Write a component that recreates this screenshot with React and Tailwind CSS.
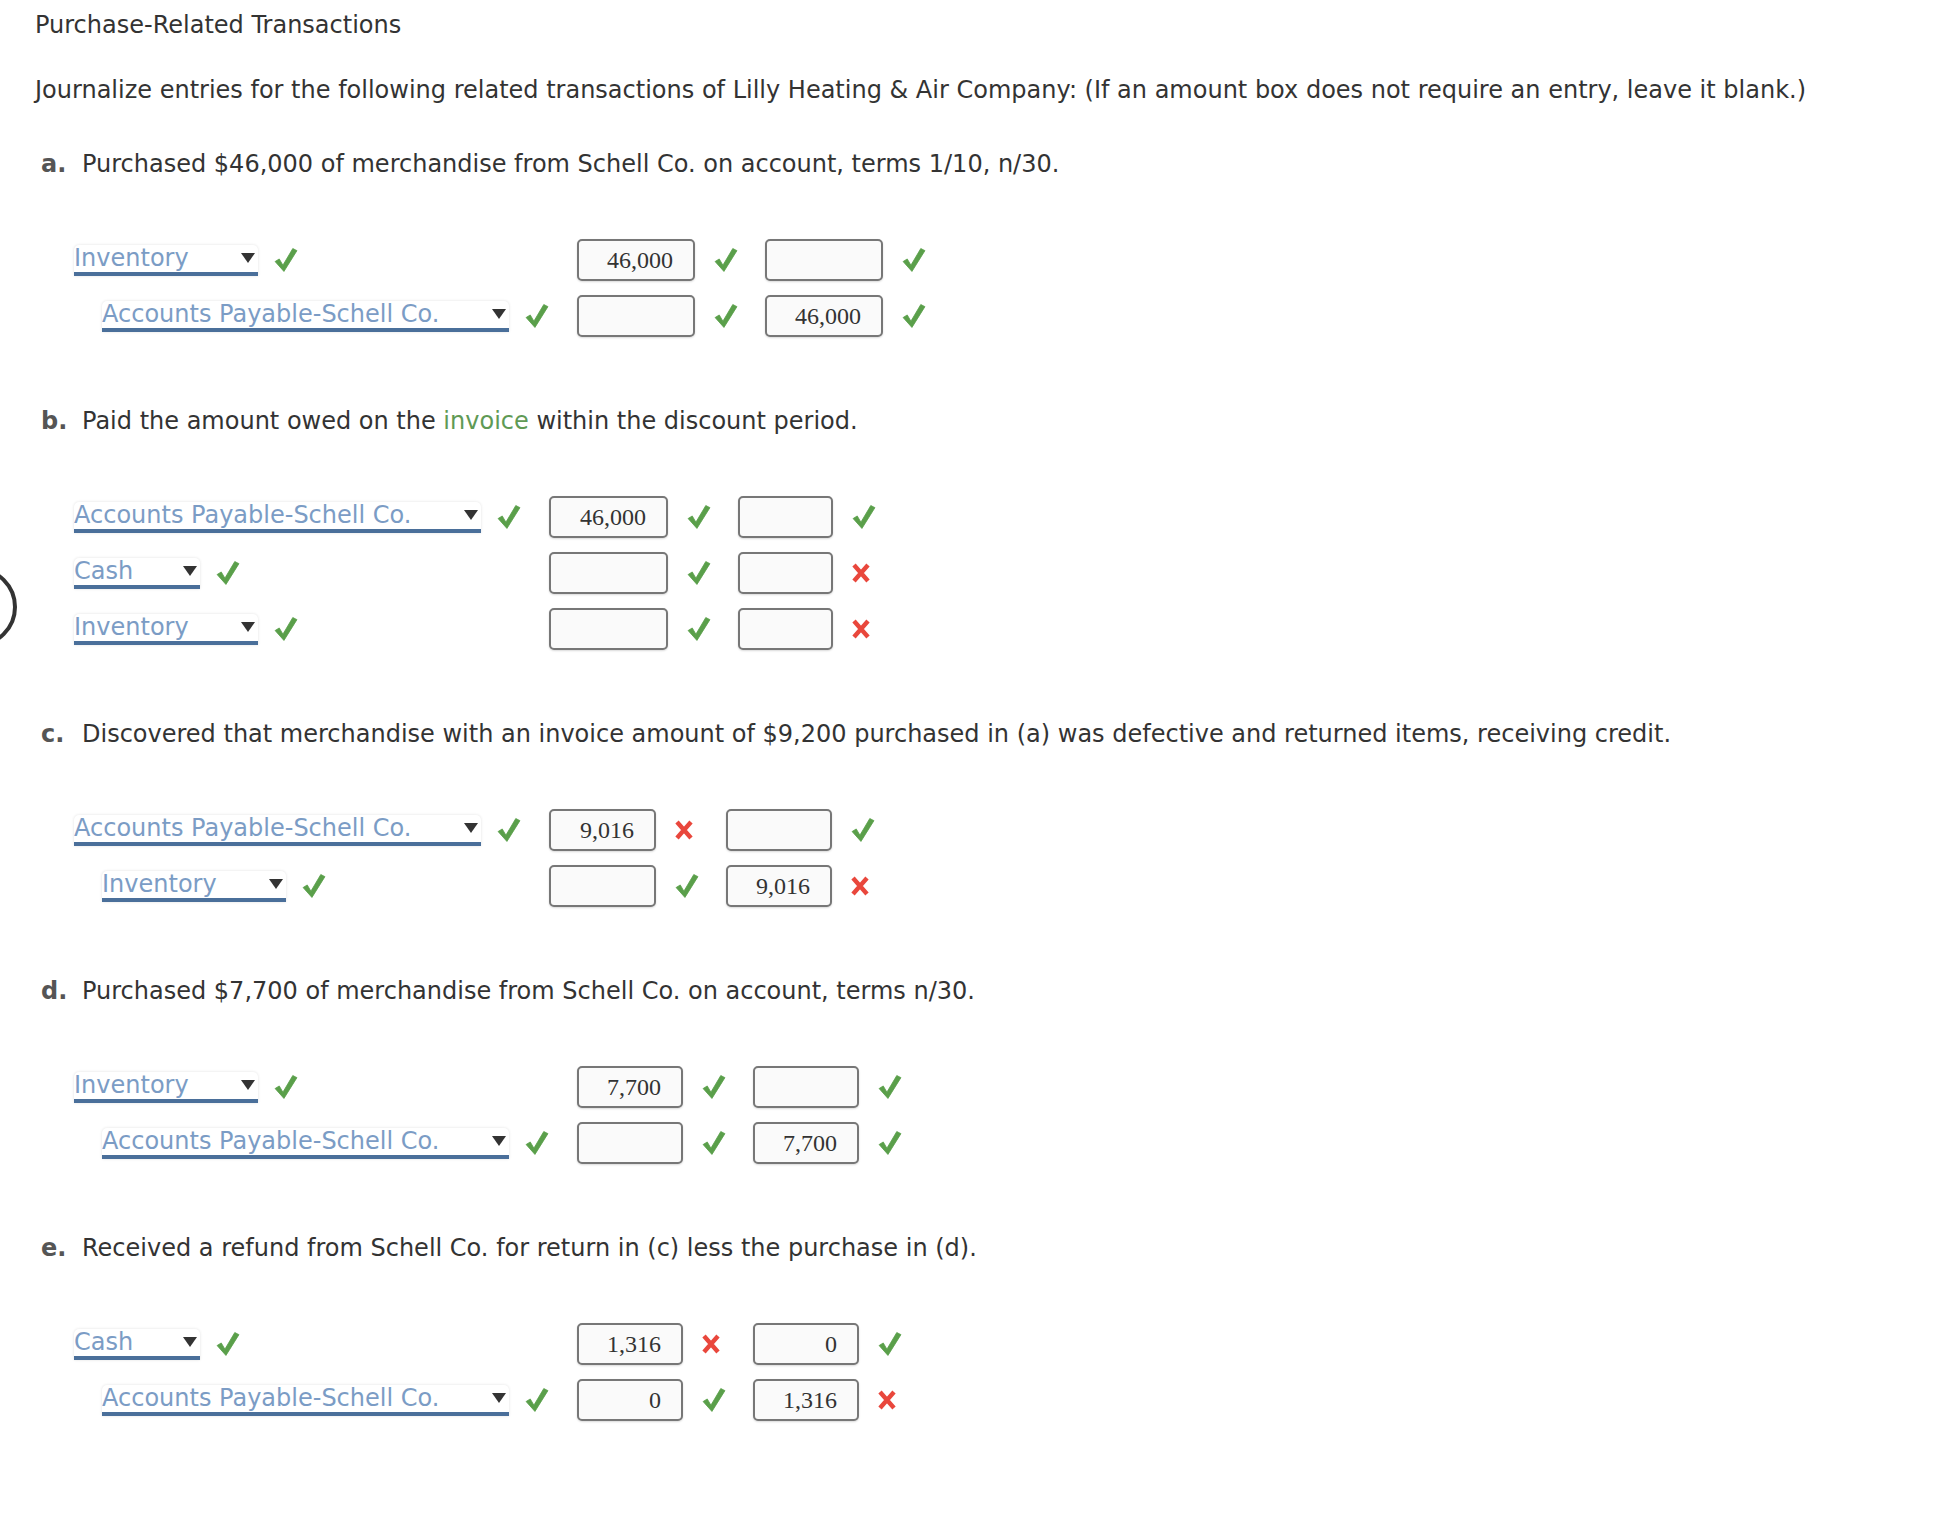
import React from "react";

const sections = [
  {
    key: "a",
    text: <>Purchased $46,000 of merchandise from Schell Co. on account, terms 1/10, n/30.</>,
    left: 503,
    w1: 118,
    w2: 118,
    rows: [
      { indent: false, acct: "Inventory", dd: 184, v1: "46,000", m1: "ok", v2: "", m2: "ok" },
      { indent: true, acct: "Accounts Payable-Schell Co.", dd: 407, v1: "", m1: "ok", v2: "46,000", m2: "ok" },
    ],
  },
  {
    key: "b",
    text: (
      <>
        Paid the amount owed on the <span className="text-[#5f9a55]">invoice</span> within the discount period.
      </>
    ),
    left: 475,
    w1: 119,
    w2: 95,
    rows: [
      { indent: false, acct: "Accounts Payable-Schell Co.", dd: 407, v1: "46,000", m1: "ok", v2: "", m2: "ok" },
      { indent: false, acct: "Cash", dd: 126, v1: "", m1: "ok", v2: "", m2: "x" },
      { indent: false, acct: "Inventory", dd: 184, v1: "", m1: "ok", v2: "", m2: "x" },
    ],
  },
  {
    key: "c",
    text: (
      <>
        Discovered that merchandise with an invoice amount of $9,200 purchased in (a) was defective and returned items,
        receiving credit.
      </>
    ),
    left: 475,
    w1: 107,
    w2: 106,
    rows: [
      { indent: false, acct: "Accounts Payable-Schell Co.", dd: 407, v1: "9,016", m1: "x", v2: "", m2: "ok" },
      { indent: true, acct: "Inventory", dd: 184, v1: "", m1: "ok", v2: "9,016", m2: "x" },
    ],
  },
  {
    key: "d",
    text: <>Purchased $7,700 of merchandise from Schell Co. on account, terms n/30.</>,
    left: 503,
    w1: 106,
    w2: 106,
    rows: [
      { indent: false, acct: "Inventory", dd: 184, v1: "7,700", m1: "ok", v2: "", m2: "ok" },
      { indent: true, acct: "Accounts Payable-Schell Co.", dd: 407, v1: "", m1: "ok", v2: "7,700", m2: "ok" },
    ],
  },
  {
    key: "e",
    text: <>Received a refund from Schell Co. for return in (c) less the purchase in (d).</>,
    left: 503,
    w1: 106,
    w2: 106,
    rows: [
      { indent: false, acct: "Cash", dd: 126, v1: "1,316", m1: "x", v2: "0", m2: "ok" },
      { indent: true, acct: "Accounts Payable-Schell Co.", dd: 407, v1: "0", m1: "ok", v2: "1,316", m2: "x" },
    ],
  },
];

function Check() {
  return (
    <svg width="25" height="26" viewBox="0 0 24 25" className="shrink-0">
      <path
        d="M2 14 L6 11.5 L9.5 17.5 L19 1.5 L23 3.5 L10.5 23.5 Z"
        fill="#5a9f4a"
        stroke="#5a9f4a"
        strokeWidth="0.8"
        strokeLinejoin="round"
      />
    </svg>
  );
}

function Cross() {
  return (
    <svg width="20" height="22" viewBox="0 0 20 22" className="shrink-0">
      <path d="M3 3 L17 19 M17 3 L3 19" stroke="#e9473c" strokeWidth="4.4" strokeLinecap="butt" />
    </svg>
  );
}

function Mark({ type }) {
  return type === "x" ? <Cross /> : <Check />;
}

function Dropdown({ label, width }) {
  return (
    <div
      className="flex h-[31px] items-center justify-between overflow-hidden rounded-t-[5px] border-b-[4px] border-[#4a6f9a] bg-white shadow-[0_0_3px_rgba(0,0,0,0.12)]"
      style={{ width }}
    >
      <span className="whitespace-nowrap text-[24px] leading-none text-[#7b9cc5]">{label}</span>
      <svg width="14" height="10" viewBox="0 0 14 10" className="mr-[3px] shrink-0">
        <path d="M0 0 H14 L7 10 Z" fill="#333" />
      </svg>
    </div>
  );
}

function Amount({ value, width }) {
  return (
    <div
      className="flex h-[42px] shrink-0 items-center justify-end rounded-[5px] border-2 border-[#777] bg-[#fafafa] pr-[20px] text-[24px] text-[#333] shadow-[0_1px_2px_rgba(0,0,0,0.15)]"
      style={{ width, fontFamily: '"Liberation Serif", "Times New Roman", serif' }}
    >
      {value}
    </div>
  );
}

function Row({ row, left, w1, w2 }) {
  return (
    <div className="flex h-[42px] items-center">
      <div className="flex items-center gap-[15px]" style={{ width: left, paddingLeft: row.indent ? 28 : 0 }}>
        <Dropdown label={row.acct} width={row.dd} />
        <Check />
      </div>
      <Amount value={row.v1} width={w1} />
      <div className="flex w-[70px] pl-[18px]">
        <Mark type={row.m1} />
      </div>
      <Amount value={row.v2} width={w2} />
      <div className="flex w-[70px] pl-[18px]">
        <Mark type={row.m2} />
      </div>
    </div>
  );
}

export default function App() {
  return (
    <div
      className="relative min-h-[1518px] w-[1948px] overflow-hidden bg-white pl-[35px] pt-[11px] text-[24px] leading-[28px] text-[#333]"
      style={{ fontFamily: '"DejaVu Sans", Verdana, sans-serif' }}
    >
      <div className="absolute left-[-63px] top-[567px] h-[80px] w-[80px] rounded-full border-[4px] border-[#333]" />

      <h1 className="text-[24px] font-normal">Purchase-Related Transactions</h1>
      <p className="mt-[37px] whitespace-nowrap">
        Journalize entries for the following related transactions of Lilly Heating &amp; Air Company: (If an amount box
        does not require an entry, leave it blank.)
      </p>

      <div className="mt-[46px] flex flex-col gap-[70px]">
        {sections.map((s) => (
          <div key={s.key}>
            <p className="whitespace-nowrap pl-[6px]">
              <span className="inline-block w-[41px] font-bold text-[#555]">{s.key}.</span>
              {s.text}
            </p>
            <div className="mt-[61px] flex flex-col gap-[14px] pl-[39px]">
              {s.rows.map((r, i) => (
                <Row key={i} row={r} left={s.left} w1={s.w1} w2={s.w2} />
              ))}
            </div>
          </div>
        ))}
      </div>
    </div>
  );
}
